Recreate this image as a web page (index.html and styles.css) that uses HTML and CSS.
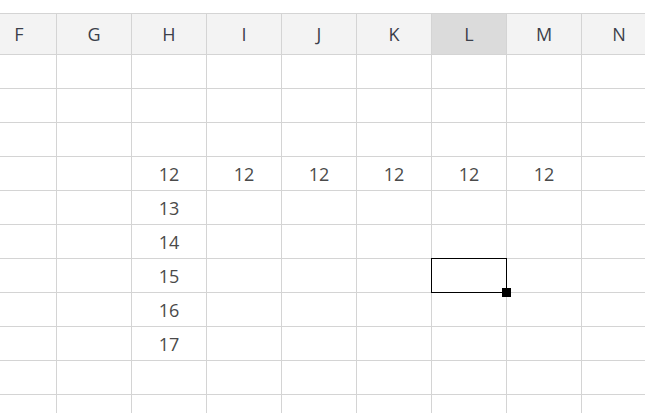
FILE: index.html
```html
<!DOCTYPE html>
<html lang="en">
<head>
	<meta charset="UTF-8">
	<title>Sheet</title>
	<link rel="stylesheet" href="styles.css">
</head>
<body>
	<div class="sheet">
		<div class="head">F</div><div class="head">G</div><div class="head">H</div><div class="head">I</div><div class="head">J</div><div class="head">K</div><div class="head on">L</div><div class="head">M</div><div class="head">N</div>

		<div class="cell"></div><div class="cell"></div><div class="cell"></div><div class="cell"></div><div class="cell"></div><div class="cell"></div><div class="cell"></div><div class="cell"></div><div class="cell"></div>
		<div class="cell"></div><div class="cell"></div><div class="cell"></div><div class="cell"></div><div class="cell"></div><div class="cell"></div><div class="cell"></div><div class="cell"></div><div class="cell"></div>
		<div class="cell"></div><div class="cell"></div><div class="cell"></div><div class="cell"></div><div class="cell"></div><div class="cell"></div><div class="cell"></div><div class="cell"></div><div class="cell"></div>
		<div class="cell"></div><div class="cell"></div><div class="cell">12</div><div class="cell">12</div><div class="cell">12</div><div class="cell">12</div><div class="cell">12</div><div class="cell">12</div><div class="cell"></div>
		<div class="cell"></div><div class="cell"></div><div class="cell">13</div><div class="cell"></div><div class="cell"></div><div class="cell"></div><div class="cell"></div><div class="cell"></div><div class="cell"></div>
		<div class="cell"></div><div class="cell"></div><div class="cell">14</div><div class="cell"></div><div class="cell"></div><div class="cell"></div><div class="cell"></div><div class="cell"></div><div class="cell"></div>
		<div class="cell"></div><div class="cell"></div><div class="cell">15</div><div class="cell"></div><div class="cell"></div><div class="cell"></div><div class="cell active"></div><div class="cell"></div><div class="cell"></div>
		<div class="cell"></div><div class="cell"></div><div class="cell">16</div><div class="cell"></div><div class="cell"></div><div class="cell"></div><div class="cell"></div><div class="cell"></div><div class="cell"></div>
		<div class="cell"></div><div class="cell"></div><div class="cell">17</div><div class="cell"></div><div class="cell"></div><div class="cell"></div><div class="cell"></div><div class="cell"></div><div class="cell"></div>
		<div class="cell"></div><div class="cell"></div><div class="cell"></div><div class="cell"></div><div class="cell"></div><div class="cell"></div><div class="cell"></div><div class="cell"></div><div class="cell"></div>
		<div class="cell"></div><div class="cell"></div><div class="cell"></div><div class="cell"></div><div class="cell"></div><div class="cell"></div><div class="cell"></div><div class="cell"></div><div class="cell"></div>
	</div>
</body>
</html>
```

FILE: styles.css
```css
body{
	margin:0;
	padding:0;
	background:#fff;
	overflow:hidden;
	font-family:"Open Sans","Liberation Sans",sans-serif;
}
.sheet{
	display:grid;
	grid-template-columns:repeat(9,75px);
	grid-auto-rows:34px;
	grid-template-rows:41px;
	margin-top:13px;
	margin-left:-18px;
	border-top:1px solid #d4d4d4;
}
.head{
	background:#f3f3f3;
	border-right:1px solid #d4d4d4;
	border-bottom:1px solid #d4d4d4;
	display:flex;
	align-items:center;
	justify-content:center;
	font-size:18px;
	color:#3b3f4a;
}
.head.on{
	background:#dbdbdb;
}
.cell{
	border-right:1px solid #d4d4d4;
	border-bottom:1px solid #d4d4d4;
	display:flex;
	align-items:center;
	justify-content:center;
	font-size:18px;
	color:#4a4a4a;
	position:relative;
}
/* selected cell */
.active::after{
	content:"";
	position:absolute;
	left:-1px;
	top:-1px;
	right:-1px;
	bottom:-1px;
	border:1px solid #000;
}
.active::before{
	content:"";
	position:absolute;
	right:-5px;
	bottom:-5px;
	width:9px;
	height:9px;
	background:#000;
	z-index:2;
}
```
